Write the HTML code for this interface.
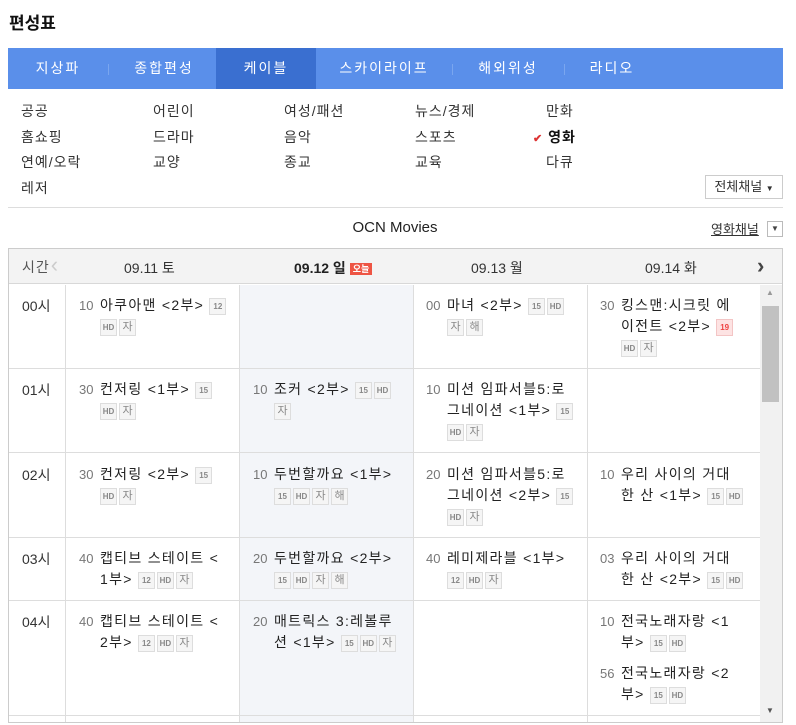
<!DOCTYPE html>
<html><head><meta charset="utf-8"><style>
*{margin:0;padding:0;box-sizing:border-box}
body{width:796px;height:725px;background:#fff;font-family:"Liberation Sans","Noto Sans CJK KR",sans-serif;color:#222;position:relative;overflow:hidden}
.a{position:absolute}
.h1{left:9px;top:9px;font-size:17px;font-weight:bold;color:#111}
.tabs{left:8px;top:48px;width:775px;height:41px;background:#5a8fea}
.tab{position:absolute;top:0;height:41px;line-height:41px;color:#fff;font-size:14px;text-align:center;letter-spacing:2px}
.sep{position:absolute;top:16px;width:1px;height:11px;background:#7aa6ef}
.cat{font-size:14px;color:#333;letter-spacing:1px}
.hr{left:8px;width:775px;height:1px;background:#ddd}
.grid{left:8px;top:248px;width:775px;height:475px;border:1px solid #ccc;background:#fff}
.hd{left:9px;top:249px;width:773px;height:35px;background:#f3f3f3;border-bottom:1px solid #d8d8d8}
.vl{position:absolute;width:1px;background:#ddd}
.hl{position:absolute;height:1px;background:#ddd}
.p{position:absolute;font-size:14px;line-height:21px;padding-left:21px;color:#222;letter-spacing:1.3px;white-space:nowrap}
.p i{position:absolute;left:0;top:0;font-style:normal;font-size:13px;color:#777;letter-spacing:0}
.b{display:inline-block;width:17px;height:17px;border:1px solid #ddd;background:#f5f5f5;font-size:8px;line-height:15px;text-align:center;color:#888;font-weight:bold;vertical-align:1px;margin-right:2px;letter-spacing:0}
.b.k{font-size:11px;font-weight:normal}
.b.r{background:#fde3e3;color:#e44;border-color:#f3c5c5}
.t{position:absolute;left:22px;font-size:14px;color:#333}
</style></head><body>
<div class="a h1">편성표</div>
<div class="a tabs">
<div class="tab" style="left:0;width:100px">지상파</div>
<div class="sep" style="left:100px"></div>
<div class="tab" style="left:104px;width:104px">종합편성</div>
<div class="tab" style="left:208px;width:100px;background:#3a6fd0">케이블</div>
<div class="tab" style="left:316px;width:120px">스카이라이프</div>
<div class="sep" style="left:444px"></div>
<div class="tab" style="left:450px;width:100px">해외위성</div>
<div class="sep" style="left:556px"></div>
<div class="tab" style="left:556px;width:96px">라디오</div>
</div>
<div class="a cat" style="left:21px;top:101px">공공</div>
<div class="a cat" style="left:153px;top:101px">어린이</div>
<div class="a cat" style="left:284px;top:101px">여성/패션</div>
<div class="a cat" style="left:415px;top:101px">뉴스/경제</div>
<div class="a cat" style="left:546px;top:101px">만화</div>
<div class="a cat" style="left:21px;top:127px">홈쇼핑</div>
<div class="a cat" style="left:153px;top:127px">드라마</div>
<div class="a cat" style="left:284px;top:127px">음악</div>
<div class="a cat" style="left:415px;top:127px">스포츠</div>
<div class="a cat" style="left:533px;top:127px;color:#111;font-weight:bold"><span style="color:#d33;font-size:11px">✔</span> 영화</div>
<div class="a cat" style="left:21px;top:152px">연예/오락</div>
<div class="a cat" style="left:153px;top:152px">교양</div>
<div class="a cat" style="left:284px;top:152px">종교</div>
<div class="a cat" style="left:415px;top:152px">교육</div>
<div class="a cat" style="left:546px;top:152px">다큐</div>
<div class="a cat" style="left:21px;top:178px">레저</div>
<div class="a" style="left:705px;top:175px;width:78px;height:24px;border:1px solid #ccc;font-size:13px;line-height:22px;text-align:center;color:#333">전체채널 <span style="font-size:8px">▼</span></div>
<div class="a hr" style="top:207px"></div>
<div class="a" style="left:0;top:219px;width:790px;text-align:center;font-size:15px;color:#222">OCN Movies</div>
<div class="a" style="left:711px;top:219px;font-size:13px;color:#333;text-decoration:underline">영화채널</div>
<div class="a" style="left:767px;top:221px;width:16px;height:16px;border:1px solid #bbb;font-size:8px;line-height:14px;text-align:center;color:#444">▼</div>
<div class="a grid"></div>
<div class="a" style="left:239px;top:285px;width:174px;height:437px;background:#f3f5f9"></div>
<div class="a hd"></div>
<div class="a" style="left:22px;top:257px;font-size:14px;color:#555;letter-spacing:1px">시간<span style="color:#ccc;font-size:22px;margin-left:1px;line-height:14px">‹</span></div>
<div class="a" style="left:124px;top:258px;font-size:14px;color:#333">09.11 토</div>
<div class="a" style="left:294px;top:258px;font-size:14px;color:#222;font-weight:bold">09.12 일 <span style="background:#e54;color:#fff;font-size:9px;padding:1px 3px;font-weight:bold;vertical-align:1px">오늘</span></div>
<div class="a" style="left:471px;top:258px;font-size:14px;color:#333">09.13 월</div>
<div class="a" style="left:645px;top:258px;font-size:14px;color:#333">09.14 화</div>
<div class="a" style="left:757px;top:253px;font-size:22px;color:#444;font-weight:bold">›</div>
<div class="vl" style="left:65px;top:285px;height:437px"></div>
<div class="vl" style="left:239px;top:285px;height:437px"></div>
<div class="vl" style="left:413px;top:285px;height:437px"></div>
<div class="vl" style="left:587px;top:285px;height:437px"></div>
<div class="hl" style="left:9px;top:368px;width:751px"></div>
<div class="hl" style="left:9px;top:452px;width:751px"></div>
<div class="hl" style="left:9px;top:537px;width:751px"></div>
<div class="hl" style="left:9px;top:600px;width:751px"></div>
<div class="hl" style="left:9px;top:715px;width:751px"></div>
<div class="a" style="left:760px;top:285px;width:22px;height:437px;background:#f1f1f1"></div>
<div class="a" style="left:762px;top:306px;width:17px;height:96px;background:#c1c1c1"></div>
<div class="a" style="left:766px;top:288px;font-size:8px;color:#999">▲</div>
<div class="a" style="left:766px;top:706px;font-size:8px;color:#555">▼</div>
<div class="t" style="top:296px">00시</div>
<div class="t" style="top:380px">01시</div>
<div class="t" style="top:465px">02시</div>
<div class="t" style="top:549px">03시</div>
<div class="t" style="top:612px">04시</div>

<div class="p" style="left:79px;top:295px"><i>10</i>아쿠아맨 &lt;2부&gt; <span class="b">12</span><br><span class="b">HD</span><span class="b k">자</span></div>
<div class="p" style="left:426px;top:295px"><i>00</i>마녀 &lt;2부&gt; <span class="b">15</span><span class="b">HD</span><br><span class="b k">자</span><span class="b k">해</span></div>
<div class="p" style="left:600px;top:295px"><i>30</i>킹스맨:시크릿 에<br>이전트 &lt;2부&gt; <span class="b r">19</span><br><span class="b">HD</span><span class="b k">자</span></div>

<div class="p" style="left:79px;top:379px"><i>30</i>컨저링 &lt;1부&gt; <span class="b">15</span><br><span class="b">HD</span><span class="b k">자</span></div>
<div class="p" style="left:253px;top:379px"><i>10</i>조커 &lt;2부&gt; <span class="b">15</span><span class="b">HD</span><br><span class="b k">자</span></div>
<div class="p" style="left:426px;top:379px"><i>10</i>미션 임파서블5:로<br>그네이션 &lt;1부&gt; <span class="b">15</span><br><span class="b">HD</span><span class="b k">자</span></div>

<div class="p" style="left:79px;top:464px"><i>30</i>컨저링 &lt;2부&gt; <span class="b">15</span><br><span class="b">HD</span><span class="b k">자</span></div>
<div class="p" style="left:253px;top:464px"><i>10</i>두번할까요 &lt;1부&gt;<br><span class="b">15</span><span class="b">HD</span><span class="b k">자</span><span class="b k">해</span></div>
<div class="p" style="left:426px;top:464px"><i>20</i>미션 임파서블5:로<br>그네이션 &lt;2부&gt; <span class="b">15</span><br><span class="b">HD</span><span class="b k">자</span></div>
<div class="p" style="left:600px;top:464px"><i>10</i>우리 사이의 거대<br>한 산 &lt;1부&gt; <span class="b">15</span><span class="b">HD</span></div>

<div class="p" style="left:79px;top:548px"><i>40</i>캡티브 스테이트 &lt;<br>1부&gt; <span class="b">12</span><span class="b">HD</span><span class="b k">자</span></div>
<div class="p" style="left:253px;top:548px"><i>20</i>두번할까요 &lt;2부&gt;<br><span class="b">15</span><span class="b">HD</span><span class="b k">자</span><span class="b k">해</span></div>
<div class="p" style="left:426px;top:548px"><i>40</i>레미제라블 &lt;1부&gt;<br><span class="b">12</span><span class="b">HD</span><span class="b k">자</span></div>
<div class="p" style="left:600px;top:548px"><i>03</i>우리 사이의 거대<br>한 산 &lt;2부&gt; <span class="b">15</span><span class="b">HD</span></div>

<div class="p" style="left:79px;top:611px"><i>40</i>캡티브 스테이트 &lt;<br>2부&gt; <span class="b">12</span><span class="b">HD</span><span class="b k">자</span></div>
<div class="p" style="left:253px;top:611px"><i>20</i>매트릭스 3:레볼루<br>션 &lt;1부&gt; <span class="b">15</span><span class="b">HD</span><span class="b k">자</span></div>
<div class="p" style="left:600px;top:611px"><i>10</i>전국노래자랑 &lt;1<br>부&gt; <span class="b">15</span><span class="b">HD</span></div>
<div class="p" style="left:600px;top:663px"><i>56</i>전국노래자랑 &lt;2<br>부&gt; <span class="b">15</span><span class="b">HD</span></div>
</body></html>
